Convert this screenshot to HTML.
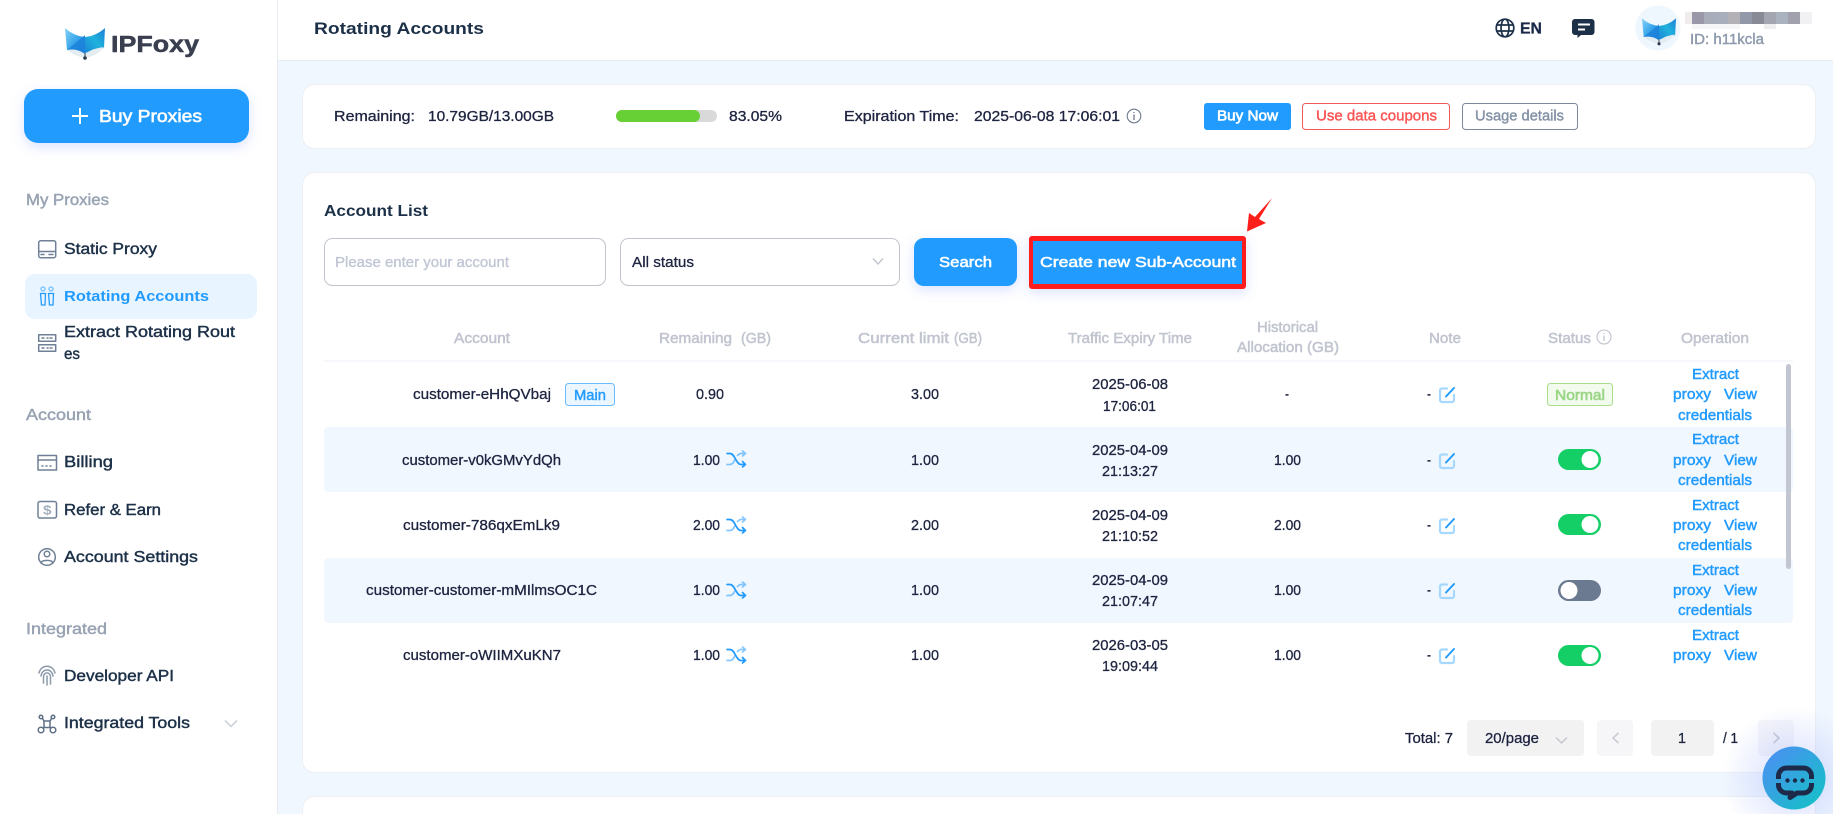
<!DOCTYPE html>
<html lang="en">
<head>
<meta charset="utf-8">
<title>Rotating Accounts - IPFoxy</title>
<style>
html,body{margin:0;padding:0;width:1833px;height:814px;overflow:hidden;background:#f1f7fe}
svg{display:block;position:absolute;left:0;top:0}
text{font-family:"Liberation Sans","Noto Sans CJK SC",sans-serif;font-size:14.5px;fill:#1e2440;stroke:#1e2440;stroke-width:.3}
.nav{font-size:15.5px;fill:#1c3048;stroke:#1c3048;stroke-width:.42}
.grp{font-size:15.5px;fill:#98a3b3;stroke:#98a3b3;stroke-width:.45}
.th{fill:#c0c4cf;stroke:#c0c4cf;stroke-width:.5}
.link{fill:#229bff;stroke:#229bff;stroke-width:.45}
.w{fill:#fff;stroke:#fff;stroke-width:.55;font-size:15px}
.ic{fill:none;stroke:#6f8096;stroke-width:1.5;stroke-linecap:round;stroke-linejoin:round}
</style>
</head>
<body>
<svg width="1833" height="814" viewBox="0 0 1833 814" xmlns="http://www.w3.org/2000/svg">
<defs>
<filter id="sh" x="-30%" y="-50%" width="160%" height="220%"><feDropShadow dx="0" dy="4" stdDeviation="6" flood-color="#5a78ff" flood-opacity=".22"/></filter>
<linearGradient id="earL" x1="0" y1="0" x2="1" y2="1"><stop offset="0" stop-color="#86d3f8"/><stop offset=".55" stop-color="#35a3ea"/><stop offset="1" stop-color="#1577d6"/></linearGradient>
<linearGradient id="earR" x1="1" y1="0" x2="0" y2="1"><stop offset="0" stop-color="#1d7fd9"/><stop offset=".5" stop-color="#1fb2dc"/><stop offset="1" stop-color="#1a86d8"/></linearGradient>
<linearGradient id="chat" x1="0" y1="0" x2="1" y2="1"><stop offset="0" stop-color="#4f8cf5"/><stop offset="1" stop-color="#10c4c4"/></linearGradient>
<radialGradient id="glow"><stop offset=".45" stop-color="#5a78ff" stop-opacity=".14"/><stop offset="1" stop-color="#5a78ff" stop-opacity="0"/></radialGradient>
<symbol id="fox" viewBox="0 0 40 33" overflow="visible">
<path d="M0 1Q9 9 20 10V26L2 23Z" fill="url(#earL)"/>
<path d="M40 1Q31 9 20 10V26L39 21Z" fill="url(#earR)"/>
<path d="M20 8L2 23Q12 22 20 27Z" fill="#1c82dc" opacity=".85"/>
<path d="M2 23Q12 21 20 27Q28 21 39 20Q32 29 20 31Q9 29 2 23Z" fill="#e3ecf0"/>
<path d="M20 26V30" stroke="#2c3a4c" stroke-width="1"/><circle cx="20" cy="31" r="1.8" fill="#2c3a4c"/>
</symbol>
<symbol id="shuf" viewBox="0 0 19 18" overflow="visible">
<path d="M0 3.5H3C8 3.5 9 14.5 14 14.5H18M15.5 11.5L18.5 14.5L15.5 17" fill="none" stroke="#229bff" stroke-width="1.7" stroke-linecap="round" stroke-linejoin="round"/>
<path d="M0 14.5H3C5.5 14.5 7 12 8 9.5M10.5 5.5C11.5 4.5 12.5 3.5 14 3.5H18M15.5 1L18.5 3.5L15.5 6" fill="none" stroke="#229bff" stroke-width="1.7" stroke-linecap="round" stroke-linejoin="round" opacity=".55"/>
</symbol>
<symbol id="edit" viewBox="0 0 16 16" overflow="visible">
<path d="M8 1.5H3A2 2 0 0 0 1 3.5V13A2 2 0 0 0 3 15H13A2 2 0 0 0 15 13V8" fill="none" stroke="#a6d8ff" stroke-width="2.2" stroke-linecap="round"/>
<path d="M7 9.5L15 1" fill="none" stroke="#229bff" stroke-width="2" stroke-linecap="round"/>
</symbol>
<symbol id="tog" viewBox="0 0 43 21" overflow="visible">
<rect width="43" height="21" rx="10.5" fill="#14ce66"/><circle cx="32" cy="10.5" r="8.5" fill="#fff"/>
</symbol>
</defs>

<!-- Main background -->
<rect width="1833" height="814" fill="#f1f7fe"/>

<!-- Header -->
<rect x="277" y="0" width="1556" height="60" fill="#fff"/>
<rect x="277" y="60" width="1556" height="1" fill="#e9edf3"/>
<text x="314" y="34" textLength="170" lengthAdjust="spacingAndGlyphs" font-weight="700" style="font-size:16.5px;fill:#1c3048;stroke:none">Rotating Accounts</text>
<g fill="none" stroke="#1c3048" stroke-width="1.7"><circle cx="1505" cy="28" r="8.8"/><ellipse cx="1505" cy="28" rx="4" ry="8.8"/><path d="M1497 25H1513M1497 31H1513"/></g>
<text x="1520" y="33.500" textLength="22" lengthAdjust="spacingAndGlyphs" font-weight="700" style="font-size:16px;fill:#1c2a4a;stroke:#1c2a4a;stroke-width:.3">EN</text>
<path d="M1575 19H1591.500A3 3 0 0 1 1594.500 22V32A3 3 0 0 1 1591.500 35H1581L1577.500 38V35H1575A3 3 0 0 1 1572 32V22A3 3 0 0 1 1575 19Z" fill="#1c3048"/>
<path d="M1578 24.500H1590M1578 29.500H1585" stroke="#fff" stroke-width="2"/>
<circle cx="1658" cy="28" r="22.500" fill="#eef6fe"/>
<use href="#fox" x="1642" y="17" width="34" height="29"/>
<g>
<rect x="1685" y="12" width="7" height="12" fill="#f0ecec"/><rect x="1692" y="12" width="12" height="12" fill="#9a98a8"/><rect x="1704" y="12" width="12" height="12" fill="#a9adb9"/><rect x="1716" y="12" width="12" height="12" fill="#a8aebc"/><rect x="1728" y="12" width="12" height="12" fill="#b3b1b5"/><rect x="1740" y="12" width="12" height="12" fill="#9298a7"/><rect x="1752" y="12" width="12" height="12" fill="#888a96"/><rect x="1764" y="12" width="12" height="12" fill="#a3a5b0"/><rect x="1776" y="12" width="12" height="12" fill="#aab1bf"/><rect x="1788" y="12" width="12" height="12" fill="#a0a1ad"/><rect x="1800" y="12" width="12" height="12" fill="#f1f1f3"/>
<rect x="1692" y="24" width="48" height="5" fill="#f6f6f8"/><rect x="1764" y="24" width="12" height="5" fill="#eeeef1"/>
</g>
<text x="1690" y="44" textLength="74" lengthAdjust="spacingAndGlyphs" style="fill:#8d99ad;stroke:#8d99ad;stroke-width:.4">ID: h11kcla</text>

<!-- Sidebar -->
<rect x="0" y="0" width="277" height="814" fill="#fff"/>
<rect x="277" y="0" width="1" height="814" fill="#e8ecf2"/>
<use href="#fox" x="65" y="27" width="40" height="33"/>
<text x="111" y="52" textLength="88" lengthAdjust="spacingAndGlyphs" font-weight="700" style="font-size:23px;fill:#3a3f50;stroke:#3a3f50;stroke-width:.5">IPFoxy</text>
<rect x="24" y="89" width="225" height="54" rx="14" fill="#229bff" filter="url(#sh)"/>
<path d="M72 116H88M80 108V124" stroke="#fff" stroke-width="2"/>
<text x="99" y="122" textLength="103" lengthAdjust="spacingAndGlyphs" class="w" style="font-size:17.500px;stroke-width:.6">Buy Proxies</text>

<text class="grp" x="26" y="205" textLength="83" lengthAdjust="spacingAndGlyphs">My Proxies</text>
<rect x="38.700" y="240.700" width="17" height="17" rx="2" class="ic"/><path d="M39 251.500H55M41 254.500H44M49 254.500H53" class="ic" stroke-width="1"/>
<text class="nav" x="64" y="254" textLength="93" lengthAdjust="spacingAndGlyphs">Static Proxy</text>
<rect x="25" y="274" width="232" height="45" rx="10" fill="#e8f4ff"/>
<g fill="none" stroke="#229bff" stroke-width="1.3"><circle cx="43" cy="289" r="2" opacity=".6"/><circle cx="51" cy="289" r="2" opacity=".6"/><path d="M40.500 293.500H45.500L45 305H41.500Z"/><path d="M48.500 293.500H53.500L53 305H49.500Z"/></g>
<text x="64" y="301" textLength="145" lengthAdjust="spacingAndGlyphs" font-weight="700" style="font-size:15px;fill:#229bff;stroke:none">Rotating Accounts</text>
<rect x="38.700" y="334.700" width="17" height="6.600" class="ic"/><rect x="38.700" y="344.700" width="17" height="6.600" class="ic"/><path d="M42 338H44M47 338H48M50 338H52M42 348H44M47 348H48M50 348H52" class="ic" stroke-width="1"/>
<text class="nav" x="64" y="337" textLength="171" lengthAdjust="spacingAndGlyphs">Extract Rotating Rout</text>
<text class="nav" x="64" y="359" textLength="16" lengthAdjust="spacingAndGlyphs">es</text>

<text class="grp" x="26" y="420" textLength="65" lengthAdjust="spacingAndGlyphs">Account</text>
<rect x="38" y="455.500" width="18.500" height="14.500" class="ic" stroke-linejoin="miter"/><path d="M38 460H56M42 466H43M46 466H47M50 466H51" class="ic"/>
<text class="nav" x="64" y="467" textLength="49" lengthAdjust="spacingAndGlyphs">Billing</text>
<rect x="38" y="501.500" width="18.500" height="16.500" rx="2" class="ic"/>
<text x="43" y="514.500" textLength="8.500" lengthAdjust="spacingAndGlyphs" font-weight="700" style="font-size:12.500px;fill:#a4b0bf;stroke:none">$</text>
<text class="nav" x="64" y="515" textLength="97" lengthAdjust="spacingAndGlyphs">Refer &amp; Earn</text>
<circle cx="47" cy="557" r="8.300" class="ic" stroke-width="1.2"/><circle cx="47" cy="554" r="2.800" class="ic" stroke-width="1.2"/><path d="M41 563C42 559.500 52 559.500 53 563" class="ic" stroke-width="1.2"/>
<text class="nav" x="64" y="562" textLength="134" lengthAdjust="spacingAndGlyphs">Account Settings</text>

<text class="grp" x="26" y="634" textLength="81" lengthAdjust="spacingAndGlyphs">Integrated</text>
<g class="ic" stroke-width=".8" style="stroke:#8c9aac"><path d="M39 673C41 664 53 664 55 673"/><path d="M41 676C42 668 52 668 53 676"/><path d="M43.500 683V677C43.500 671.500 50.500 671.500 50.500 677V684"/><path d="M47 676V685"/></g>
<text class="nav" x="64" y="681" textLength="110" lengthAdjust="spacingAndGlyphs">Developer API</text>
<g class="ic" stroke-width="1.200" style="stroke:#5f7086"><circle cx="41" cy="717" r="1.800"/><circle cx="53" cy="717" r="1.800"/><circle cx="41" cy="730" r="2.800"/><circle cx="53" cy="730" r="2.800"/><path d="M42.500 718.500L44 721H50L51.500 718.500M44 721V727.500H50V721M43 728L44 727.500M51 728L50 727.500"/></g>
<text class="nav" x="64" y="728" textLength="126" lengthAdjust="spacingAndGlyphs">Integrated Tools</text>
<path d="M225 720.500L231 726.500L237 720.500" fill="none" stroke="#c8ced8" stroke-width="1.500"/>

<!-- Summary card -->
<rect x="302.500" y="84.500" width="1513" height="64" rx="12" fill="#fff" stroke="#ecf0f4"/>
<text x="334" y="121" textLength="81" lengthAdjust="spacingAndGlyphs">Remaining:</text>
<text x="428" y="121" textLength="126" lengthAdjust="spacingAndGlyphs">10.79GB/13.00GB</text>
<rect x="616" y="110" width="101" height="12" rx="6" fill="#d9d9d9"/>
<rect x="616" y="110" width="84" height="12" rx="6" fill="#67d034"/>
<text x="729" y="121" textLength="53" lengthAdjust="spacingAndGlyphs">83.05%</text>
<text x="844" y="121" textLength="115" lengthAdjust="spacingAndGlyphs">Expiration Time:</text>
<text x="974" y="121" textLength="146" lengthAdjust="spacingAndGlyphs">2025-06-08 17:06:01</text>
<circle cx="1134" cy="116" r="6.800" fill="none" stroke="#6f7a8c" stroke-width="1.100"/><path d="M1134 114.500V120M1134 112V113" stroke="#6f7a8c" stroke-width="1.300"/>
<rect x="1204" y="103" width="87" height="27" rx="3" fill="#229bff"/>
<text x="1217" y="120.500" textLength="61" lengthAdjust="spacingAndGlyphs" class="w" style="font-size:14.500px;stroke-width:.6">Buy Now</text>
<rect x="1302.500" y="103.500" width="147" height="26" rx="3" fill="#fff" stroke="#f25a5a"/>
<text x="1316" y="120.500" textLength="121" lengthAdjust="spacingAndGlyphs" style="fill:#fb5454;stroke:#fb5454;stroke-width:.4">Use data coupons</text>
<rect x="1462.500" y="103.500" width="115" height="26" rx="3" fill="#fff" stroke="#7b899c"/>
<text x="1475" y="120.500" textLength="89" lengthAdjust="spacingAndGlyphs" style="fill:#8492a6;stroke:#8492a6;stroke-width:.4">Usage details</text>

<!-- Account list card -->
<rect x="302.500" y="172.500" width="1513" height="600" rx="12" fill="#fff" stroke="#ecf0f4"/>
<text x="324" y="216" textLength="104" lengthAdjust="spacingAndGlyphs" font-weight="700" style="font-size:16px;fill:#1c3048;stroke:none">Account List</text>
<rect x="324.500" y="238.500" width="281" height="47" rx="8" fill="#fff" stroke="#c0c4cc"/>
<text x="335" y="267" textLength="174" lengthAdjust="spacingAndGlyphs" style="fill:#c0c6d4;stroke:#c0c6d4;stroke-width:.35">Please enter your account</text>
<rect x="620.500" y="238.500" width="279" height="47" rx="8" fill="#fff" stroke="#c0c4cc"/>
<text x="632" y="267" textLength="62" lengthAdjust="spacingAndGlyphs">All status</text>
<path d="M873 258.500L878 264L883 258.500" fill="none" stroke="#c0c4cc" stroke-width="1.400"/>
<rect x="914" y="238" width="103" height="48" rx="10" fill="#229bff" filter="url(#sh)"/>
<text x="939" y="267" textLength="53" lengthAdjust="spacingAndGlyphs" class="w">Search</text>
<rect x="1029" y="236" width="217" height="53" rx="3" fill="#ff1f1a" filter="url(#sh)"/>
<rect x="1033" y="241" width="209" height="43" fill="#229bff"/>
<text x="1040" y="267" textLength="196" lengthAdjust="spacingAndGlyphs" class="w">Create new Sub-Account</text>
<path d="M1272 198L1259 219L1266 223L1247 231.500L1249 213L1255 217Z" fill="#ff1f1a"/>

<!-- Table head -->
<text class="th" x="454" y="343" textLength="56" lengthAdjust="spacingAndGlyphs">Account</text>
<text class="th" x="659" y="343" textLength="73" lengthAdjust="spacingAndGlyphs">Remaining</text>
<text class="th" x="741" y="343" textLength="30" lengthAdjust="spacingAndGlyphs">(GB)</text>
<text class="th" x="858" y="343" textLength="91" lengthAdjust="spacingAndGlyphs">Current limit</text>
<text class="th" x="954" y="343" textLength="28" lengthAdjust="spacingAndGlyphs">(GB)</text>
<text class="th" x="1068" y="343" textLength="124" lengthAdjust="spacingAndGlyphs">Traffic Expiry Time</text>
<text class="th" x="1257" y="332" textLength="61" lengthAdjust="spacingAndGlyphs">Historical</text>
<text class="th" x="1237" y="352" textLength="102" lengthAdjust="spacingAndGlyphs">Allocation (GB)</text>
<text class="th" x="1429" y="343" textLength="32" lengthAdjust="spacingAndGlyphs">Note</text>
<text class="th" x="1548" y="343" textLength="43" lengthAdjust="spacingAndGlyphs">Status</text>
<circle cx="1604" cy="337" r="7" fill="none" stroke="#c0c4cf" stroke-width="1.100"/><path d="M1604 335.500V341M1604 333V334" stroke="#c0c4cf" stroke-width="1.300"/>
<text class="th" x="1681" y="343" textLength="68" lengthAdjust="spacingAndGlyphs">Operation</text>
<rect x="324" y="360" width="1469" height="2" fill="#f5f7fb"/>

<!-- Row stripes -->
<rect x="324" y="427" width="1469" height="65" rx="4" fill="#f1f7fe"/>
<rect x="324" y="558" width="1469" height="65" rx="4" fill="#f1f7fe"/>

<!-- Row 1 -->
<text x="413" y="399" textLength="138" lengthAdjust="spacingAndGlyphs">customer-eHhQVbaj</text>
<rect x="565.500" y="383.500" width="49" height="22" rx="3" fill="#ecf6ff" stroke="#6bbcff"/>
<text x="574" y="400" textLength="32" lengthAdjust="spacingAndGlyphs" class="link">Main</text>
<text x="696" y="399" textLength="28" lengthAdjust="spacingAndGlyphs">0.90</text>
<text x="911" y="399" textLength="28" lengthAdjust="spacingAndGlyphs">3.00</text>
<text x="1092" y="389" textLength="76" lengthAdjust="spacingAndGlyphs">2025-06-08</text>
<text x="1103" y="411" textLength="53" lengthAdjust="spacingAndGlyphs">17:06:01</text>
<text x="1285" y="399" textLength="4" lengthAdjust="spacingAndGlyphs">-</text>
<text x="1427" y="399" textLength="4" lengthAdjust="spacingAndGlyphs">-</text>
<use href="#edit" x="1439" y="387" width="16" height="16"/>
<rect x="1547.500" y="383.500" width="65" height="22" rx="3" fill="#f3fbee" stroke="#a8dd8c"/>
<text x="1555" y="400" textLength="50" lengthAdjust="spacingAndGlyphs" style="fill:#9ad686;stroke:#9ad686;stroke-width:.6">Normal</text>
<text class="link" x="1692" y="379" textLength="47" lengthAdjust="spacingAndGlyphs">Extract</text>
<text class="link" x="1673" y="399" textLength="38" lengthAdjust="spacingAndGlyphs">proxy</text>
<text class="link" x="1724" y="399" textLength="33" lengthAdjust="spacingAndGlyphs">View</text>
<text class="link" x="1678" y="420" textLength="74" lengthAdjust="spacingAndGlyphs">credentials</text>

<!-- Row 2 -->
<text x="402" y="465" textLength="159" lengthAdjust="spacingAndGlyphs">customer-v0kGMvYdQh</text>
<text x="693" y="465" textLength="27" lengthAdjust="spacingAndGlyphs">1.00</text>
<use href="#shuf" x="727" y="450" width="19" height="18"/>
<text x="911" y="465" textLength="28" lengthAdjust="spacingAndGlyphs">1.00</text>
<text x="1092" y="455" textLength="76" lengthAdjust="spacingAndGlyphs">2025-04-09</text>
<text x="1102" y="476" textLength="56" lengthAdjust="spacingAndGlyphs">21:13:27</text>
<text x="1274" y="465" textLength="27" lengthAdjust="spacingAndGlyphs">1.00</text>
<text x="1427" y="465" textLength="4" lengthAdjust="spacingAndGlyphs">-</text>
<use href="#edit" x="1439" y="453" width="16" height="16"/>
<use href="#tog" x="1558" y="449" width="43" height="21"/>
<text class="link" x="1692" y="444" textLength="47" lengthAdjust="spacingAndGlyphs">Extract</text>
<text class="link" x="1673" y="465" textLength="38" lengthAdjust="spacingAndGlyphs">proxy</text>
<text class="link" x="1724" y="465" textLength="33" lengthAdjust="spacingAndGlyphs">View</text>
<text class="link" x="1678" y="485" textLength="74" lengthAdjust="spacingAndGlyphs">credentials</text>

<!-- Row 3 -->
<text x="403" y="530" textLength="157" lengthAdjust="spacingAndGlyphs">customer-786qxEmLk9</text>
<text x="693" y="530" textLength="27" lengthAdjust="spacingAndGlyphs">2.00</text>
<use href="#shuf" x="727" y="516" width="19" height="18"/>
<text x="911" y="530" textLength="28" lengthAdjust="spacingAndGlyphs">2.00</text>
<text x="1092" y="520" textLength="76" lengthAdjust="spacingAndGlyphs">2025-04-09</text>
<text x="1102" y="541" textLength="56" lengthAdjust="spacingAndGlyphs">21:10:52</text>
<text x="1274" y="530" textLength="27" lengthAdjust="spacingAndGlyphs">2.00</text>
<text x="1427" y="530" textLength="4" lengthAdjust="spacingAndGlyphs">-</text>
<use href="#edit" x="1439" y="518" width="16" height="16"/>
<use href="#tog" x="1558" y="514" width="43" height="21"/>
<text class="link" x="1692" y="510" textLength="47" lengthAdjust="spacingAndGlyphs">Extract</text>
<text class="link" x="1673" y="530" textLength="38" lengthAdjust="spacingAndGlyphs">proxy</text>
<text class="link" x="1724" y="530" textLength="33" lengthAdjust="spacingAndGlyphs">View</text>
<text class="link" x="1678" y="550" textLength="74" lengthAdjust="spacingAndGlyphs">credentials</text>

<!-- Row 4 -->
<text x="366" y="595" textLength="231" lengthAdjust="spacingAndGlyphs">customer-customer-mMIlmsOC1C</text>
<text x="693" y="595" textLength="27" lengthAdjust="spacingAndGlyphs">1.00</text>
<use href="#shuf" x="727" y="581" width="19" height="18"/>
<text x="911" y="595" textLength="28" lengthAdjust="spacingAndGlyphs">1.00</text>
<text x="1092" y="585" textLength="76" lengthAdjust="spacingAndGlyphs">2025-04-09</text>
<text x="1102" y="606" textLength="56" lengthAdjust="spacingAndGlyphs">21:07:47</text>
<text x="1274" y="595" textLength="27" lengthAdjust="spacingAndGlyphs">1.00</text>
<text x="1427" y="595" textLength="4" lengthAdjust="spacingAndGlyphs">-</text>
<use href="#edit" x="1439" y="583" width="16" height="16"/>
<rect x="1558" y="580" width="43" height="21" rx="10.500" fill="#6b7a90"/><circle cx="1569" cy="590.500" r="8.500" fill="#fff"/>
<text class="link" x="1692" y="575" textLength="47" lengthAdjust="spacingAndGlyphs">Extract</text>
<text class="link" x="1673" y="595" textLength="38" lengthAdjust="spacingAndGlyphs">proxy</text>
<text class="link" x="1724" y="595" textLength="33" lengthAdjust="spacingAndGlyphs">View</text>
<text class="link" x="1678" y="615" textLength="74" lengthAdjust="spacingAndGlyphs">credentials</text>

<!-- Row 5 -->
<text x="403" y="660" textLength="158" lengthAdjust="spacingAndGlyphs">customer-oWIIMXuKN7</text>
<text x="693" y="660" textLength="27" lengthAdjust="spacingAndGlyphs">1.00</text>
<use href="#shuf" x="727" y="646" width="19" height="18"/>
<text x="911" y="660" textLength="28" lengthAdjust="spacingAndGlyphs">1.00</text>
<text x="1092" y="650" textLength="76" lengthAdjust="spacingAndGlyphs">2026-03-05</text>
<text x="1102" y="671" textLength="56" lengthAdjust="spacingAndGlyphs">19:09:44</text>
<text x="1274" y="660" textLength="27" lengthAdjust="spacingAndGlyphs">1.00</text>
<text x="1427" y="660" textLength="4" lengthAdjust="spacingAndGlyphs">-</text>
<use href="#edit" x="1439" y="648" width="16" height="16"/>
<use href="#tog" x="1558" y="645" width="43" height="21"/>
<text class="link" x="1692" y="640" textLength="47" lengthAdjust="spacingAndGlyphs">Extract</text>
<text class="link" x="1673" y="660" textLength="38" lengthAdjust="spacingAndGlyphs">proxy</text>
<text class="link" x="1724" y="660" textLength="33" lengthAdjust="spacingAndGlyphs">View</text>

<!-- Scrollbar -->
<rect x="1786" y="364" width="5" height="205" rx="2.500" fill="#c2c6d0"/>

<!-- Pagination -->
<text x="1405" y="743" textLength="48" lengthAdjust="spacingAndGlyphs">Total: 7</text>
<rect x="1467" y="720" width="117" height="36" rx="4" fill="#f2f2f3"/>
<text x="1485" y="743" textLength="54" lengthAdjust="spacingAndGlyphs">20/page</text>
<path d="M1556 737.500L1561.500 743L1567 737.500" fill="none" stroke="#c4c8ce" stroke-width="1.500"/>
<rect x="1597" y="720" width="36" height="36" rx="4" fill="#f6f6f9"/>
<path d="M1618.500 733L1613 738L1618.500 743" fill="none" stroke="#c8ccd4" stroke-width="1.600"/>
<rect x="1651" y="720" width="63" height="36" rx="4" fill="#f2f2f3"/>
<text x="1678" y="743" textLength="8" lengthAdjust="spacingAndGlyphs">1</text>
<text x="1723" y="743" textLength="15" lengthAdjust="spacingAndGlyphs">/ 1</text>
<rect x="1758" y="720" width="36" height="36" rx="4" fill="#f6f6f9"/>
<path d="M1773.500 733L1779 738L1773.500 743" fill="none" stroke="#c8ccd4" stroke-width="1.600"/>

<!-- Bottom card -->
<rect x="302.500" y="796.500" width="1513" height="40" rx="12" fill="#fff" stroke="#ecf0f4"/>

<!-- Chat widget -->
<circle cx="1794" cy="778" r="72" fill="url(#glow)"/>
<circle cx="1794" cy="778" r="31.500" fill="url(#chat)"/>
<path d="M1778.500 779V776A8 8 0 0 1 1786.500 768H1803.500A8 8 0 0 1 1811.500 776V779M1778.500 783V785A8 8 0 0 0 1786.500 793H1792L1790 797.500L1797 793H1803.500A8 8 0 0 0 1811.500 785V783" fill="none" stroke="#1e2a4a" stroke-width="5" stroke-linejoin="round"/>
<circle cx="1787.500" cy="780.500" r="2.200" fill="#1e2a4a"/><circle cx="1795" cy="780.500" r="2.200" fill="#1e2a4a"/><circle cx="1802.500" cy="780.500" r="2.200" fill="#1e2a4a"/>
</svg>
</body>
</html>
